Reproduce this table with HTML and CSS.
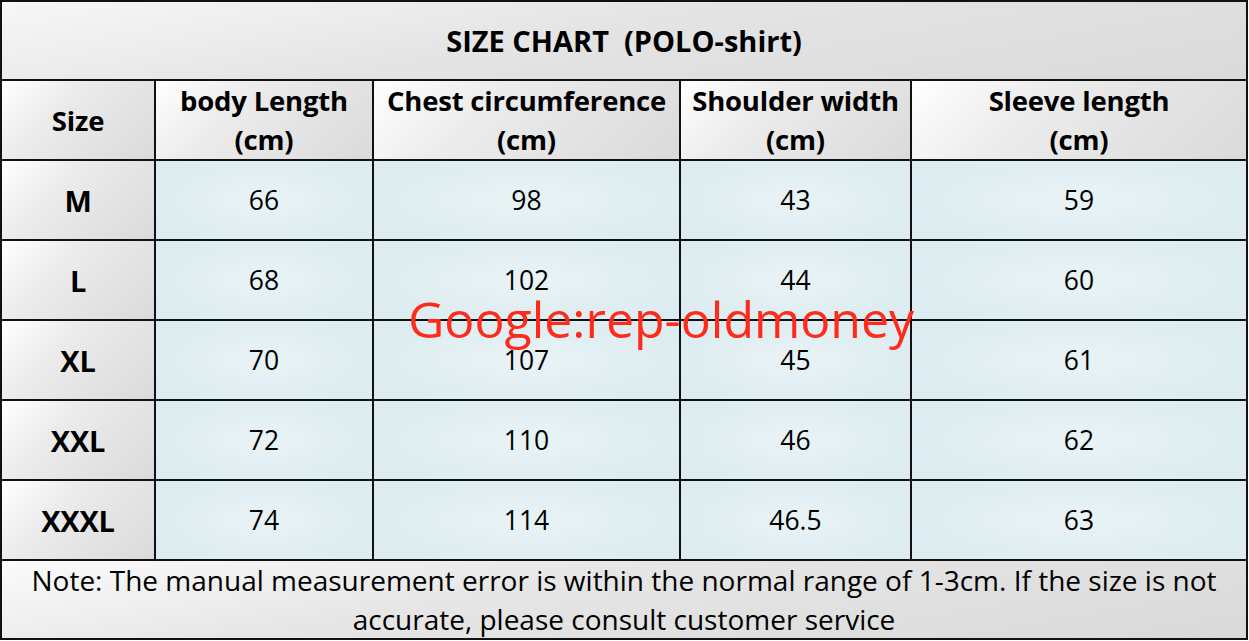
FILE: index.html
```html
<!DOCTYPE html>
<html>
<head>
<meta charset="utf-8">
<link rel="stylesheet" href="styles.css">
</head>
<body>
<div class="chart">
  <div class="cell title">SIZE CHART&nbsp;&nbsp;(POLO-shirt)</div>

  <div class="cell head">Size</div>
  <div class="cell head">body Length<br>(cm)</div>
  <div class="cell head">Chest circumference<br>(cm)</div>
  <div class="cell head">Shoulder width<br>(cm)</div>
  <div class="cell head">Sleeve length<br>(cm)</div>

  <div class="cell head label">M</div>
  <div class="cell data">66</div>
  <div class="cell data">98</div>
  <div class="cell data">43</div>
  <div class="cell data">59</div>

  <div class="cell head label">L</div>
  <div class="cell data">68</div>
  <div class="cell data">102</div>
  <div class="cell data">44</div>
  <div class="cell data">60</div>

  <div class="cell head label">XL</div>
  <div class="cell data">70</div>
  <div class="cell data">107</div>
  <div class="cell data">45</div>
  <div class="cell data">61</div>

  <div class="cell head label">XXL</div>
  <div class="cell data">72</div>
  <div class="cell data">110</div>
  <div class="cell data">46</div>
  <div class="cell data">62</div>

  <div class="cell head label">XXXL</div>
  <div class="cell data">74</div>
  <div class="cell data">114</div>
  <div class="cell data">46.5</div>
  <div class="cell data">63</div>

  <div class="cell note">Note: The manual measurement error is within the normal range of 1-3cm. If the size is not accurate, please consult customer service</div>

  <div class="watermark">Google:rep-oldmoney</div>
</div>
</body>
</html>
```

FILE: styles.css
```css
html, body {
  margin: 0;
  padding: 0;
  background: #ffffff;
}

.chart {
  position: relative;
  width: 1248px;
  height: 640px;
  box-sizing: border-box;
  border: 2px solid #111;
  background: #111;
  display: grid;
  grid-template-columns: 152px 216px 305px 229px 334px;
  grid-template-rows: 77px 78px 78px 78px 78px 78px 78px 77px;
  gap: 2px;
  font-family: "Open Sans", "Noto Sans", "DejaVu Sans", sans-serif;
  color: #000;
}

.cell {
  display: flex;
  align-items: center;
  justify-content: center;
  text-align: center;
}

.title {
  grid-column: 1 / -1;
  font-weight: 700;
  font-size: 29px;
  background: linear-gradient(170deg, #f7f7f7 0%, #e4e4e4 45%, #dadada 100%);
}

.head {
  font-weight: 700;
  font-size: 27.5px;
  line-height: 39px;
  letter-spacing: -0.2px;
  background: linear-gradient(135deg, #ffffff 0%, #ececec 35%, #dadada 100%);
}

.label {
  font-size: 29px;
}

.data {
  font-size: 26.5px;
  background: radial-gradient(ellipse at center, #e9f3f5 0%, #deedf1 70%, #dbecf0 100%);
}

.note {
  grid-column: 1 / -1;
  font-size: 28px;
  line-height: 39px;
  padding: 0 10px;
  background: linear-gradient(170deg, #fbfbfb 0%, #e6e6e6 40%, #d9d9d9 100%);
}

.watermark {
  position: absolute;
  left: 406px;
  top: 286px;
  font-size: 50px;
  line-height: 62px;
  color: #ff2a1a;
  white-space: nowrap;
  pointer-events: none;
}
```
